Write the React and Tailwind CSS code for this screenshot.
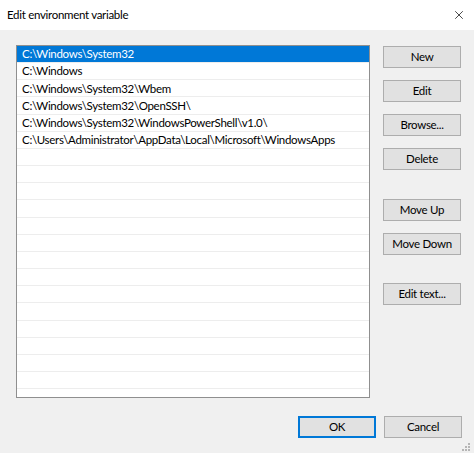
import { X } from 'lucide-react'

const paths = [
  'C:\\Windows\\System32',
  'C:\\Windows',
  'C:\\Windows\\System32\\Wbem',
  'C:\\Windows\\System32\\OpenSSH\\',
  'C:\\Windows\\System32\\WindowsPowerShell\\v1.0\\',
  'C:\\Users\\Administrator\\AppData\\Local\\Microsoft\\WindowsApps',
]

// empty rows fill the rest of the list box
const rows = [...paths, ...Array(15).fill('')]

function Button({ children, primary, className = '' }) {
  return (
    <button
      className={`h-[22px] w-[78px] bg-[#e1e1e1] text-black flex items-center justify-center ${
        primary ? 'border-2 border-[#0078d7]' : 'border border-[#adadad]'
      } ${className}`}
    >
      {children}
    </button>
  )
}

export default function App() {
  return (
    <div className="w-[474px] h-[453px] bg-[#f0f0f0] flex flex-col overflow-hidden font-['Lato',sans-serif] text-[11.5px] tracking-[-0.3px] text-black">
      {/* Title bar */}
      <div className="h-[30px] bg-white flex items-center justify-between pl-[7px] pr-[8px] shrink-0">
        <span>Edit environment variable</span>
        <X className="w-[14px] h-[14px] text-[#111]" strokeWidth={1.3} />
      </div>

      {/* Body */}
      <div className="flex pl-[16px] pt-[15px]">
        <div className="w-[354px] h-[353px] border border-[#8f8f8f] bg-white overflow-hidden">
          {rows.map((p, i) => (
            <div
              key={i}
              className={`h-[17.17px] flex items-center px-[5px] border-b border-[#ededed] whitespace-nowrap leading-none ${
                i === 0 ? 'bg-[#0078d7] text-white' : ''
              }`}
            >
              {p}
            </div>
          ))}
        </div>

        <div className="ml-[13px] mt-[1px] flex flex-col">
          <Button>New</Button>
          <Button className="mt-[12px]">Edit</Button>
          <Button className="mt-[12px]">Browse...</Button>
          <Button className="mt-[12px]">Delete</Button>
          <Button className="mt-[29px]">Move Up</Button>
          <Button className="mt-[12px]">Move Down</Button>
          <Button className="mt-[28px]">Edit text...</Button>
        </div>
      </div>

      {/* Footer */}
      <div className="flex justify-end gap-[8px] pr-[12px] mt-[18px]">
        <Button primary>OK</Button>
        <Button>Cancel</Button>
      </div>

      <div className="flex justify-end pr-[4px] mt-[5px]">
        <svg width="8" height="8" viewBox="0 0 8 8" fill="#b5b5b5">
          <rect x="6" y="0" width="2" height="2" />
          <rect x="3" y="3" width="2" height="2" />
          <rect x="6" y="3" width="2" height="2" />
          <rect x="0" y="6" width="2" height="2" />
          <rect x="3" y="6" width="2" height="2" />
          <rect x="6" y="6" width="2" height="2" />
        </svg>
      </div>
    </div>
  )
}
